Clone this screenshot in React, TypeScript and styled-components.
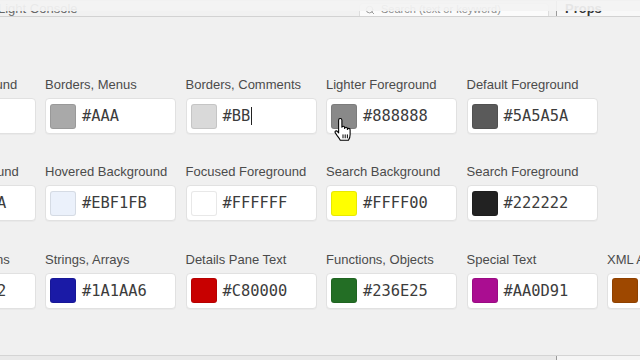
import React from "react";
import styled, { createGlobalStyle } from "styled-components";
import { Search } from "lucide-react";

const Global = createGlobalStyle`
  html, body { margin: 0; padding: 0; }
  body {
    width: 640px;
    height: 360px;
    overflow: hidden;
    background: #f0f0f0;
    font-family: "Liberation Sans", Arial, sans-serif;
  }
`;

const Page = styled.div`
  position: relative;
  width: 640px;
  height: 360px;
  display: flex;
  flex-direction: column;
  overflow: hidden;
`;

const Header = styled.div`
  height: 17px;
  flex: none;
  display: flex;
  box-sizing: border-box;
  border-top: 1px solid #d0d0d0;
  border-bottom: 1px solid #d2d2d2;
  background: #f1f1f1;
`;

const HeaderMain = styled.div`
  width: 556px;
  flex: none;
  display: flex;
  align-items: flex-end;
  overflow: hidden;
`;

const Title = styled.span`
  font-size: 13px;
  line-height: 13px;
  color: #666;
  margin-left: -2px;
  padding-bottom: 1px;
  flex: 1;
  white-space: nowrap;
`;

const SearchBox = styled.div`
  width: 190px;
  height: 13px;
  margin-right: 7px;
  box-sizing: border-box;
  display: flex;
  align-items: flex-end;
  gap: 6px;
  padding: 0 0 1px 5px;
  background: #fbfbfb;
  border: 1px solid #dddddd;
  border-bottom: none;
  border-radius: 4px 4px 0 0;
  font-size: 11px;
  line-height: 11px;
  color: #8a8a8a;
  white-space: nowrap;
`;

const Divider = styled.div`
  width: 1px;
  flex: none;
  background: #9a9a9a;
`;

const SidePanel = styled.div<{ $tone: string }>`
  flex: 1;
  display: flex;
  align-items: flex-end;
  padding-left: 8px;
  background: ${(p) => p.$tone};
  overflow: hidden;
`;

const SideTitle = styled.span`
  font-size: 13px;
  line-height: 13px;
  font-weight: bold;
  color: #333;
  padding-bottom: 1px;
`;

const Fade = styled.div`
  position: absolute;
  top: 0;
  left: 0;
  right: 0;
  height: 11px;
  background: rgba(243, 243, 243, 0.93);
  pointer-events: none;
`;

const Main = styled.div`
  flex: 1;
  padding-top: 60px;
  overflow: hidden;
`;

const Rows = styled.div`
  display: flex;
  flex-direction: column;
  gap: 30.4px;
  margin-left: -95.5px;
`;

const Row = styled.div`
  display: flex;
  gap: 9.5px;
`;

const Field = styled.div`
  width: 131px;
  flex: none;
  display: flex;
  flex-direction: column;
`;

const Label = styled.div`
  font-size: 13px;
  line-height: 16px;
  color: #4b4b4b;
  margin-bottom: 5px;
  white-space: nowrap;
`;

const InputBox = styled.div`
  position: relative;
  height: 36px;
  box-sizing: border-box;
  display: flex;
  align-items: center;
  gap: 6px;
  padding: 0 4px;
  background: #ffffff;
  border: 1px solid #e1e1e1;
  border-radius: 4px;
  box-shadow: 0 1px 1px rgba(0, 0, 0, 0.03);
`;

const Swatch = styled.div<{ $color: string }>`
  width: 26px;
  height: 25px;
  flex: none;
  box-sizing: border-box;
  border-radius: 3px;
  background: ${(p) => p.$color};
  border: 1px solid rgba(0, 0, 0, 0.09);
`;

const Value = styled.span`
  font-family: "DejaVu Sans Mono", "Liberation Mono", monospace;
  font-size: 15.4px;
  color: #3c3c3c;
  white-space: nowrap;
  display: flex;
  align-items: center;
`;

const Caret = styled.span`
  display: inline-block;
  width: 1px;
  height: 18px;
  margin-left: 1px;
  background: #222;
`;

const HandCursor = styled.svg`
  position: absolute;
  left: 7px;
  top: 19px;
  width: 18px;
  height: 23px;
  overflow: visible;
`;

const Footer = styled.div`
  height: 5px;
  flex: none;
  display: flex;
  box-sizing: border-box;
  border-top: 1px solid #d4d4d4;
`;

const FooterMain = styled.div`
  width: 556px;
  flex: none;
  background: #e9e9e9;
`;

type Item = {
  label: string;
  value: string;
  color: string;
  caret?: boolean;
  hand?: boolean;
};

const rows: Item[][] = [
  [
    { label: "Lighter Background", value: "#FFF", color: "#FFFFFF" },
    { label: "Borders, Menus", value: "#AAA", color: "#A9A9A9" },
    { label: "Borders, Comments", value: "#BB", color: "#D9D9D9", caret: true },
    { label: "Lighter Foreground", value: "#888888", color: "#898989", hand: true },
    { label: "Default Foreground", value: "#5A5A5A", color: "#5A5A5A" },
  ],
  [
    { label: "Default Background", value: "#F3F3FA", color: "#F3F3FA" },
    { label: "Hovered Background", value: "#EBF1FB", color: "#EBF1FB" },
    { label: "Focused Foreground", value: "#FFFFFF", color: "#FFFFFF" },
    { label: "Search Background", value: "#FFFF00", color: "#FFFF00" },
    { label: "Search Foreground", value: "#222222", color: "#222222" },
  ],
  [
    { label: "Keywords, Tokens", value: "#1C00C2", color: "#1C00C2" },
    { label: "Strings, Arrays", value: "#1A1AA6", color: "#1A1AA6" },
    { label: "Details Pane Text", value: "#C80000", color: "#C80000" },
    { label: "Functions, Objects", value: "#236E25", color: "#236E25" },
    { label: "Special Text", value: "#AA0D91", color: "#AA0D91" },
    { label: "XML Attributes", value: "#994500", color: "#9E4800" },
  ],
];

function Hand() {
  return (
    <HandCursor viewBox="0 0 16 21">
      <path
        d="M4 2 Q4 0.5 5.5 0.5 Q7 0.5 7 2 V8.5 Q7 7.5 8.25 7.5 Q9.5 7.5 9.5 8.7 V9.5 Q9.5 8.5 10.75 8.5 Q12 8.5 12 9.7 V10.5 Q12 9.5 13.25 9.5 Q14.5 9.5 14.5 10.7 V15 Q14.5 18 13 20.3 H5.5 Q4.6 18.6 3 16.6 L1 13.6 Q0.3 12.4 1.3 11.9 Q2.3 11.4 3 12.4 L4 13.6 Z"
        fill="#ffffff"
        stroke="#000000"
        strokeWidth="1"
        strokeLinejoin="round"
      />
      <path d="M8 15 V18.5 M10 15 V18.5 M12 15 V18.5" stroke="#000" strokeWidth="0.9" />
    </HandCursor>
  );
}

export default function App() {
  return (
    <Page>
      <Global />
      <Header>
        <HeaderMain>
          <Title>Light Console</Title>
          <SearchBox>
            <Search size={10} strokeWidth={2} />
            <span>Search (text or keyword)</span>
          </SearchBox>
        </HeaderMain>
        <Divider />
        <SidePanel $tone="#f8f8f8">
          <SideTitle>Props</SideTitle>
        </SidePanel>
      </Header>
      <Fade />
      <Main>
        <Rows>
          {rows.map((row, ri) => (
            <Row key={ri}>
              {row.map((it) => (
                <Field key={it.label}>
                  <Label>{it.label}</Label>
                  <InputBox>
                    <Swatch $color={it.color} />
                    <Value>
                      {it.value}
                      {it.caret && <Caret />}
                    </Value>
                    {it.hand && <Hand />}
                  </InputBox>
                </Field>
              ))}
            </Row>
          ))}
        </Rows>
      </Main>
      <Footer>
        <FooterMain />
        <Divider />
        <SidePanel $tone="#f5f5f5" />
      </Footer>
    </Page>
  );
}
